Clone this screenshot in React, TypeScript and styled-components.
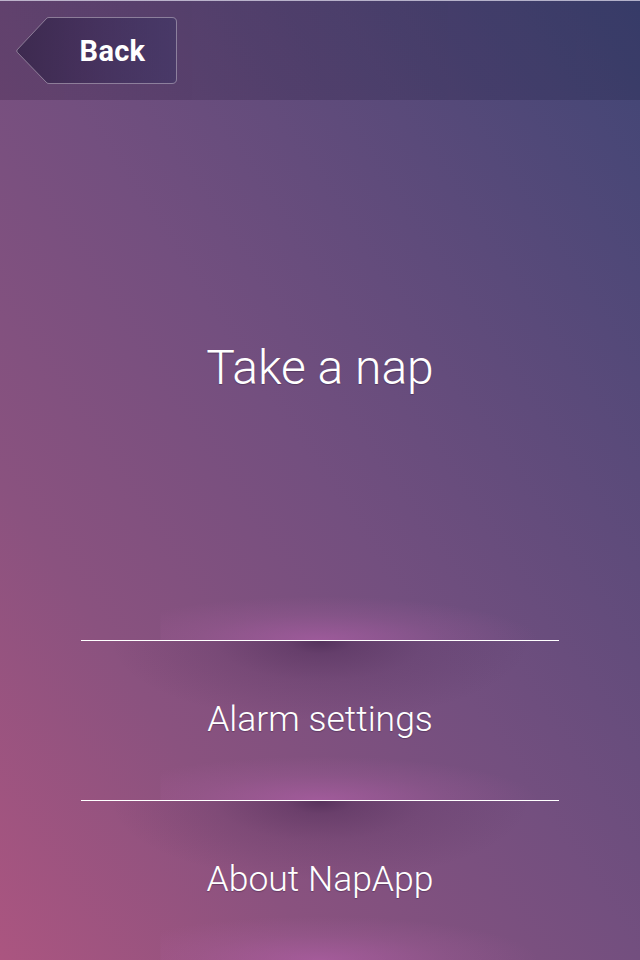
import React from "react";
import styled, { createGlobalStyle } from "styled-components";

const GlobalStyle = createGlobalStyle`
  html, body {
    margin: 0;
    padding: 0;
    background: #6c4f80;
  }
  body {
    font-family: Roboto, "Open Sans", "Liberation Sans", sans-serif;
    -webkit-font-smoothing: antialiased;
  }
  * { box-sizing: border-box; }
`;

const Page = styled.div`
  position: relative;
  width: 640px;
  height: 960px;
  overflow: hidden;
  display: flex;
  flex-direction: column;
  background: linear-gradient(to top right, #ab5580 0%, #8a527f 25%, #734f7f 50%, #5a4a7a 75%, #404575 100%);
  color: #fff;
`;

const Header = styled.header`
  height: 100px;
  flex: 0 0 100px;
  display: flex;
  align-items: center;
  padding: 0 16px;
  background: linear-gradient(to right, rgba(30, 15, 45, 0.22), rgba(15, 20, 50, 0.2));
  border-top: 1px solid rgba(220, 218, 235, 0.75);
`;

const BackButton = styled.button`
  position: relative;
  width: 162px;
  height: 68px;
  margin-top: 1px;
  padding: 0 0 0 31px;
  border: none;
  background: transparent;
  color: #fff;
  font-family: Roboto, "Liberation Sans", sans-serif;
  font-weight: 700;
  font-size: 29px;
  letter-spacing: 0.3px;
  cursor: pointer;
  display: flex;
  align-items: center;
  justify-content: center;
`;

const ButtonShape = styled.svg`
  position: absolute;
  inset: 0;
  width: 100%;
  height: 100%;
  overflow: visible;
`;

const ButtonLabel = styled.span`
  position: relative;
  line-height: 1;
  margin-top: 1px;
`;

const TitleArea = styled.main`
  flex: 0 0 540px;
  display: flex;
  align-items: center;
  justify-content: center;
`;

const Title = styled.h1`
  margin: 0;
  margin-top: -6px;
  font-family: Roboto, "Liberation Sans", sans-serif;
  font-weight: 300;
  font-size: 48px;
  letter-spacing: 0;
  color: #fff;
  text-shadow: 0 1px 1px rgba(40, 20, 50, 0.35);
`;

const Menu = styled.nav`
  display: flex;
  flex-direction: column;
`;

const Divider = styled.div`
  position: relative;
  height: 1px;
  flex: 0 0 1px;
  margin: 0 81px;
  background: #ffffff;

  &::before {
    content: "";
    position: absolute;
    left: 50%;
    bottom: 1px;
    width: 380px;
    height: 44px;
    transform: translateX(-42%);
    background: radial-gradient(
      ellipse at 42% 100%,
      rgba(190, 100, 180, 0.5) 0%,
      rgba(180, 100, 170, 0.2) 40%,
      rgba(180, 100, 170, 0) 70%
    );
    pointer-events: none;
  }

  &::after {
    content: "";
    position: absolute;
    left: 50%;
    top: 1px;
    width: 420px;
    height: 80px;
    transform: translateX(-50%);
    background: radial-gradient(
      ellipse 50% 100% at 50% 0%,
      rgba(60, 30, 70, 0.6) 0%,
      rgba(60, 30, 70, 0.35) 16%,
      rgba(60, 30, 70, 0.14) 50%,
      rgba(60, 30, 70, 0) 100%
    );
    pointer-events: none;
  }
`;

const MenuItem = styled.a`
  position: relative;
  z-index: 1;
  height: 159px;
  flex: 0 0 159px;
  display: flex;
  align-items: center;
  justify-content: center;
  padding-bottom: 4px;
  font-family: Roboto, "Liberation Sans", sans-serif;
  font-weight: 300;
  font-size: 35.5px;
  color: #fff;
  text-decoration: none;
  text-shadow: 0 1px 1px rgba(40, 20, 50, 0.35);
`;

const items = ["Alarm settings", "About NapApp"];

export default function App() {
  return (
    <>
      <GlobalStyle />
      <Page>
        <Header>
          <BackButton type="button">
            <ButtonShape viewBox="0 0 162 68" preserveAspectRatio="none">
              <defs>
                <linearGradient id="backFill" x1="0" y1="0" x2="1" y2="0">
                  <stop offset="0" stopColor="rgb(52,36,72)" stopOpacity="0.8" />
                  <stop offset="0.45" stopColor="rgb(50,36,78)" stopOpacity="0.55" />
                  <stop offset="1" stopColor="rgb(45,45,95)" stopOpacity="0.35" />
                </linearGradient>
              </defs>
              <path
                d="M33 0.5 H156 Q160.5 0.5 160.5 5 V62 Q160.5 66.5 156 66.5 H33 Q31.5 66.5 30.5 65.5 L1.2 35.2 Q0.3 34 1.2 32.8 L30.5 1.5 Q31.5 0.5 33 0.5 Z"
                fill="url(#backFill)"
                stroke="rgba(255,255,255,0.35)"
                strokeWidth="1"
              />
            </ButtonShape>
            <ButtonLabel>Back</ButtonLabel>
          </BackButton>
        </Header>
        <TitleArea>
          <Title>Take a nap</Title>
        </TitleArea>
        <Menu>
          {items.map((label) => (
            <React.Fragment key={label}>
              <Divider />
              <MenuItem href="#">{label}</MenuItem>
            </React.Fragment>
          ))}
          <Divider />
        </Menu>
      </Page>
    </>
  );
}
